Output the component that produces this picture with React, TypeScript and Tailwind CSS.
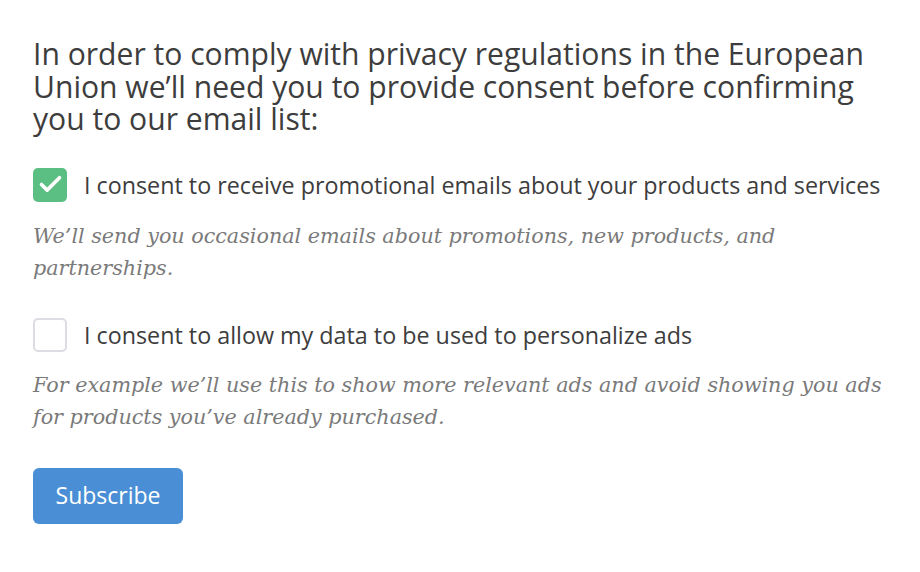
import { Check } from 'lucide-react';

export default function App() {
    return (
        <div className="w-[920px] h-[572px] bg-white pl-[33px] pt-[38px] text-[#3d3d3d]" style={{ fontFamily: '"Open Sans", sans-serif' }}>
            <h1 className="text-[30.1px] leading-[32.5px] font-normal w-[850px]">
                In order to comply with privacy regulations in the European Union we’ll need you to provide consent before confirming you to our email list:
            </h1>

            <label className="mt-[32px] flex items-center gap-[17px]">
                <span className="w-[34px] h-[34px] rounded-[5px] bg-[#5bbf83] flex items-center justify-center">
                    <Check className="w-[27px] h-[27px] text-white" strokeWidth={3.2} />
                </span>
                <span className="text-[23.3px] leading-[34px] whitespace-nowrap">I consent to receive promotional emails about your products and services</span>
            </label>
            <p className="mt-[18px] text-[20.7px] leading-[32px] italic text-[#7a7a7a] w-[800px]" style={{ fontFamily: '"DejaVu Serif", serif' }}>
                We’ll send you occasional emails about promotions, new products, and partnerships.
            </p>

            <label className="mt-[34px] flex items-center gap-[17px]">
                <span className="w-[34px] h-[34px] rounded-[5px] border-2 border-[#dcdde3] bg-white" />
                <span className="text-[23.3px] leading-[34px] whitespace-nowrap">I consent to allow my data to be used to personalize ads</span>
            </label>
            <p className="mt-[17px] text-[20.7px] leading-[32px] italic text-[#7a7a7a] w-[870px]" style={{ fontFamily: '"DejaVu Serif", serif' }}>
                For example we’ll use this to show more relevant ads and avoid showing you ads for products you’ve already purchased.
            </p>

            <button className="mt-[35px] w-[150px] h-[56px] rounded-[6px] bg-[#4a8fd5] text-white text-[23px]">
                Subscribe
            </button>
        </div>
    );
}
